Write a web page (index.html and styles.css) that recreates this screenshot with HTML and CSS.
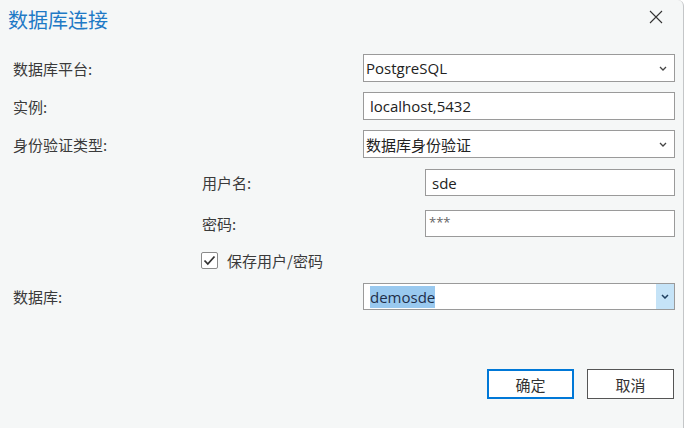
FILE: index.html
```html
<!DOCTYPE html>
<html lang="zh-CN">
<head>
<meta charset="utf-8">
<title>数据库连接</title>
<link rel="stylesheet" href="styles.css">
</head>
<body>
<div class="dialog">
  <div class="titlebar">
    <div class="title">数据库连接</div>
    <button class="close" aria-label="关闭">
      <svg width="14" height="14" viewBox="0 0 14 14"><path d="M1 1 L13 13 M13 1 L1 13" stroke="#333" stroke-width="1.1" fill="none"/></svg>
    </button>
  </div>
  <div class="form">
    <div class="row">
      <div class="label">数据库平台:</div>
      <div class="field select"><span class="value">PostgreSQL</span><span class="arrow"><svg width="8" height="5" viewBox="0 0 8 5"><path d="M1 1 L4 4 L7 1" stroke="#444" stroke-width="1.3" fill="none"/></svg></span></div>
    </div>
    <div class="row">
      <div class="label">实例:</div>
      <div class="field input"><span class="value">localhost,5432</span></div>
    </div>
    <div class="row">
      <div class="label">身份验证类型:</div>
      <div class="field select"><span class="value">数据库身份验证</span><span class="arrow"><svg width="8" height="5" viewBox="0 0 8 5"><path d="M1 1 L4 4 L7 1" stroke="#444" stroke-width="1.3" fill="none"/></svg></span></div>
    </div>
    <div class="subrow first">
      <div class="sublabel">用户名:</div>
      <div class="field input small"><span class="value">sde</span></div>
    </div>
    <div class="subrow">
      <div class="sublabel">密码:</div>
      <div class="field input small"><span class="value pw">***</span></div>
    </div>
    <div class="checkrow">
      <span class="checkbox"><svg width="13" height="11" viewBox="0 0 13 11"><path d="M1.5 5.5 L4.8 9 L11.5 1.5" stroke="#333" stroke-width="1.8" fill="none"/></svg></span>
      <span class="checklabel">保存用户/密码</span>
    </div>
    <div class="row db">
      <div class="label">数据库:</div>
      <div class="field select active"><span class="value"><span class="sel">demosde</span></span><span class="arrow blue"><svg width="8" height="5" viewBox="0 0 8 5"><path d="M1 1 L4 4 L7 1" stroke="#1f3f5f" stroke-width="1.5" fill="none"/></svg></span></div>
    </div>
  </div>
  <div class="buttons">
    <button class="btn primary">确定</button>
    <button class="btn">取消</button>
  </div>
</div>
</body>
</html>
```
FILE: styles.css
```css
* { box-sizing: border-box; }
html, body { margin: 0; padding: 0; }
body {
  width: 686px;
  height: 428px;
  background: #ffffff;
  font-family: "Open Sans", "Noto Sans CJK SC", sans-serif;
  font-size: 14px;
  color: #333;
  overflow: hidden;
}
.dialog {
  width: 684px;
  height: 428px;
  background: #f5f7f7;
  border-right: 1px solid #c4c6c8;
  border-top-right-radius: 6px;
  display: flex;
  flex-direction: column;
}
.titlebar {
  height: 38px;
  display: flex;
  align-items: center;
  justify-content: space-between;
  padding: 0 20px 0 8px;
}
.title {
  font-family: "Noto Sans CJK SC", sans-serif;
  font-size: 20px;
  color: #1f7ac6;
  line-height: 1;
  margin-top: 1px;
}
.close {
  border: 0;
  background: transparent;
  padding: 0;
  width: 14px;
  height: 14px;
  display: flex;
  margin-top: -4px;
}
.form {
  padding: 16px 8px 0 13px;
  display: flex;
  flex-direction: column;
}
.row {
  display: flex;
  align-items: center;
  justify-content: space-between;
  height: 28px;
  margin-bottom: 10px;
}
.label, .sublabel, .checklabel {
  font-family: "Noto Sans CJK SC", sans-serif;
  font-size: 15px;
  color: #3a3a3a;
}
.field {
  width: 312px;
  height: 28px;
  background: #fff;
  border: 1px solid #9a9a9a;
  display: flex;
  align-items: center;
  justify-content: space-between;
}
.field .value {
  padding-left: 2px;
  font-size: 15px;
  color: #222;
  white-space: nowrap;
}
.field.input .value { padding-left: 6px; }
.arrow {
  width: 18px;
  height: 100%;
  display: flex;
  align-items: center;
  justify-content: center;
  padding-right: 4px;
}
.arrow.blue {
  background: #c5e3f7;
  padding-right: 0;
}
.field.active .value { padding-left: 6px; }
.sel {
  background: #99c9ef;
  color: #1f2f4a;
  padding: 1px 0;
}
.subrow {
  display: flex;
  align-items: center;
  justify-content: space-between;
  height: 27px;
  margin-bottom: 14px;
  padding-left: 189px;
}
.subrow.first { margin-top: 1px; }
.field.small { width: 250px; height: 27px; }
.field .value.pw { font-size: 13px; color: #666; padding-left: 3px; margin-top: -3px; }
.checkrow {
  display: flex;
  align-items: center;
  height: 18px;
  margin-top: 0;
  padding-left: 188px;
  margin-bottom: 14px;
}
.checkbox {
  width: 17px;
  height: 17px;
  border: 1px solid #8a8a8a;
  border-radius: 2px;
  background: #fff;
  display: flex;
  align-items: center;
  justify-content: center;
  margin-right: 9px;
}
.row.db { height: 27px; }
.row.db .field { height: 27px; }
.buttons {
  display: flex;
  justify-content: flex-end;
  gap: 13px;
  padding: 49px 9px 0 0;
}
.btn {
  width: 87px;
  height: 30px;
  background: #fff;
  border: 1px solid #555;
  font-family: "Noto Sans CJK SC", sans-serif;
  font-size: 15px;
  color: #333;
  padding: 0;
}
.btn.primary {
  border: 1px solid #0078d7;
  box-shadow: inset 0 0 0 1px #0078d7;
}
```
